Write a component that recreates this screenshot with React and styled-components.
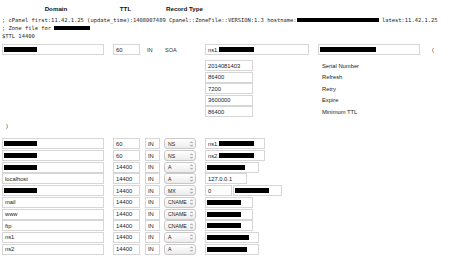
import React from "react";
import styled, { createGlobalStyle } from "styled-components";

const GlobalStyle = createGlobalStyle`
  html, body { margin: 0; padding: 0; background: #fff; }
  body { font-family: "Liberation Sans", Arial, sans-serif; color: #222; }
`;

const Page = styled.div`
  width: 474px;
  height: 259px;
  overflow: hidden;
  padding-left: 2px;
  box-sizing: border-box;
`;

const HeadRow = styled.div`
  display: grid;
  grid-template-columns: 108px 31px 87px;
  height: 16px;
  align-items: center;
  text-align: center;
  font: bold 6.2px "Liberation Sans", Arial, sans-serif;
  color: #111;
`;

const Comment = styled.div`
  font-family: "DejaVu Sans Mono", "Liberation Mono", monospace;
  font-size: 5.45px;
  line-height: 8px;
  height: 8px;
  white-space: pre;
  color: #222;
  display: flex;
  align-items: center;
`;

const Redact = styled.span`
  display: inline-block;
  width: ${(p) => p.$w}px;
  height: ${(p) => p.$h || 5}px;
  background: #000;
  flex: none;
`;

const Field = styled.div`
  display: flex;
  align-items: center;
  box-sizing: border-box;
  width: ${(p) => p.$w}px;
  height: 11px;
  padding: 0 ${(p) => (p.$tight ? 1 : 2)}px;
  border: 1px solid #d6d6d6;
  background: #fff;
  font-size: 5.8px;
  color: #222;
  white-space: nowrap;
  overflow: hidden;
`;

const Plain = styled.span`
  font-size: 5.6px;
  color: #333;
  padding-left: ${(p) => p.$pad || 0}px;
`;

const SoaRow = styled.div`
  display: grid;
  grid-template-columns: 111px 32px 19px 41px 113px 114px auto;
  align-items: center;
  margin-top: 4px;
`;

const SerialBlock = styled.div`
  display: flex;
  flex-direction: column;
  gap: 0.6px;
  margin: 5px 0 0 203px;
`;

const SerialRow = styled.div`
  display: grid;
  grid-template-columns: 117px auto;
  align-items: center;
`;

const Label = styled.span`
  font-size: 5.8px;
  color: #222;
`;

const Paren = styled.div`
  font-size: 6px;
  line-height: 8px;
  padding-left: ${(p) => p.$pad}px;
  margin-top: ${(p) => p.$mt || 0}px;
  color: #333;
`;

const Records = styled.div`
  display: flex;
  flex-direction: column;
  gap: 0.7px;
  margin-top: 8px;
`;

const RecordRow = styled.div`
  display: grid;
  grid-template-columns: 111px 32px 19px 41px auto;
  align-items: center;
`;

const ValueCell = styled.div`
  display: flex;
  gap: 1px;
`;

const Select = styled.div`
  display: flex;
  align-items: center;
  justify-content: space-between;
  box-sizing: border-box;
  width: 32px;
  height: 11px;
  padding: 0 2px 0 3px;
  border: 1px solid #c9c9c9;
  border-radius: 3px;
  background: linear-gradient(#ffffff, #ececec);
  font-size: 5.2px;
  color: #222;
`;

function Arrows() {
  return (
    <svg width="3" height="6" viewBox="0 0 3 6">
      <path d="M0.3 2.2 L1.5 0.8 L2.7 2.2" fill="none" stroke="#555" strokeWidth="0.6" />
      <path d="M0.3 3.8 L1.5 5.2 L2.7 3.8" fill="none" stroke="#555" strokeWidth="0.6" />
    </svg>
  );
}

const serials = [
  ["2014081403", "Serial Number"],
  ["86400", "Refresh"],
  ["7200", "Retry"],
  ["3600000", "Expire"],
  ["86400", "Minimum TTL"],
];

const records = [
  { name: null, ttl: "60", type: "NS", vals: [{ w: 60, text: "ns1.", r: 35 }] },
  { name: null, ttl: "60", type: "NS", vals: [{ w: 60, text: "ns2.", r: 35 }] },
  { name: null, ttl: "14400", type: "A", vals: [{ w: 54, r: 38 }] },
  { name: "localhost", ttl: "14400", type: "A", vals: [{ w: 42, text: "127.0.0.1" }] },
  { name: null, ttl: "14400", type: "MX", vals: [{ w: 27, text: "0" }, { w: 49, r: 34 }] },
  { name: "mail", ttl: "14400", type: "CNAME", vals: [{ w: 48, r: 34 }] },
  { name: "www", ttl: "14400", type: "CNAME", vals: [{ w: 48, r: 34 }] },
  { name: "ftp", ttl: "14400", type: "CNAME", vals: [{ w: 48, r: 34 }] },
  { name: "ns1", ttl: "14400", type: "A", vals: [{ w: 54, r: 42 }] },
  { name: "ns2", ttl: "14400", type: "A", vals: [{ w: 54, r: 40 }] },
];

function App() {
  return (
    <Page>
      <GlobalStyle />
      <HeadRow>
        <span>Domain</span>
        <span>TTL</span>
        <span>Record Type</span>
      </HeadRow>
      <Comment>
        {"; cPanel first:11.42.1.25 (update_time):1408007489 Cpanel::ZoneFile::VERSION:1.3 hostname:"}
        <Redact $w={82} $h={4.5} />
        {" latest:11.42.1.25"}
      </Comment>
      <Comment>
        {"; Zone file for "}
        <Redact $w={36} $h={4.5} />
      </Comment>
      <Comment>{"$TTL 14400"}</Comment>

      <SoaRow>
        <Field $w={102} $tight>
          <Redact $w={33} />
        </Field>
        <Field $w={27}>60</Field>
        <Plain $pad={2}>IN</Plain>
        <Plain $pad={1}>SOA</Plain>
        <Field $w={104}>
          ns1.
          <Redact $w={35} />
        </Field>
        <Field $w={102} $tight>
          <Redact $w={56} />
        </Field>
        <Plain>(</Plain>
      </SoaRow>

      <SerialBlock>
        {serials.map(([v, l]) => (
          <SerialRow key={l}>
            <Field $w={48}>{v}</Field>
            <Label>{l}</Label>
          </SerialRow>
        ))}
      </SerialBlock>

      <Paren $pad={4} $mt={5}>)</Paren>

      <Records>
        {records.map((rec, i) => (
          <RecordRow key={i}>
            <Field $w={102} $tight={!rec.name}>
              {rec.name ? rec.name : <Redact $w={33} />}
            </Field>
            <Field $w={27}>{rec.ttl}</Field>
            <Field $w={15}>IN</Field>
            <Select>
              <span>{rec.type}</span>
              <Arrows />
            </Select>
            <ValueCell>
              {rec.vals.map((v, j) => (
                <Field key={j} $w={v.w} $tight={!v.text}>
                  {v.text}
                  {v.r ? <Redact $w={v.r} /> : null}
                </Field>
              ))}
            </ValueCell>
          </RecordRow>
        ))}
      </Records>
    </Page>
  );
}

export default App;
